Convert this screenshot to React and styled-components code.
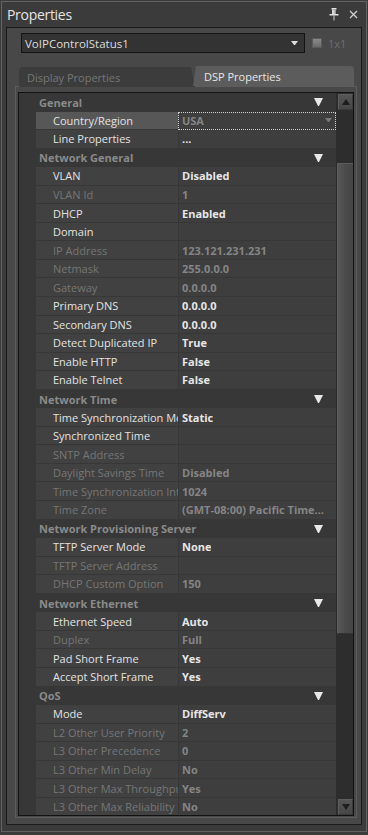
import React from "react";
import styled, { createGlobalStyle } from "styled-components";

const GlobalStyle = createGlobalStyle`
  html, body {
    margin: 0;
    padding: 0;
    background: #3b3b3b;
  }
  body {
    font-family: "Open Sans", "Noto Sans", sans-serif;
  }
  * {
    box-sizing: border-box;
  }
`;

const Window = styled.div`
  width: 368px;
  height: 835px;
  padding: 1px 1px 3px 1px;
  background: #3b3b3b;
  display: flex;
  flex-direction: column;
`;

const Frame = styled.div`
  flex: 1;
  border: 1px solid #626262;
  display: flex;
  flex-direction: column;
  min-height: 0;
`;

const TitleBar = styled.div`
  height: 25px;
  display: flex;
  align-items: center;
  justify-content: space-between;
  padding: 0 8px 0 5px;
`;

const Title = styled.div`
  font-size: 14px;
  color: #e4e4e4;
  letter-spacing: -0.3px;
`;

const TitleIcons = styled.div`
  display: flex;
  align-items: center;
  gap: 10px;
`;

const Body = styled.div`
  flex: 1;
  display: flex;
  padding: 0 4px 6px 4px;
  min-height: 0;
`;

const Panel = styled.div`
  flex: 1;
  border: 1px solid #1a1a1a;
  background: #484848;
  padding: 5px 4px 6px 8px;
  display: flex;
  flex-direction: column;
  min-height: 0;
`;

const Toolbar = styled.div`
  display: flex;
  align-items: center;
  padding-left: 6px;
  height: 20px;
`;

const Select = styled.div`
  width: 284px;
  height: 20px;
  border: 1px solid #141414;
  background: #333333;
  display: flex;
  align-items: center;
  justify-content: space-between;
  padding: 0 6px 0 3px;
  font-size: 11.5px;
  color: #dcdcdc;
`;

const CheckWrap = styled.div`
  display: flex;
  align-items: center;
  margin-left: 7px;
  gap: 6px;
  font-size: 11px;
  color: #6e6e6e;
`;

const CheckBox = styled.div`
  width: 10px;
  height: 10px;
  border: 1px solid #5a5a5a;
  background: linear-gradient(#8a8a8a, #6a6a6a);
`;

const TabStrip = styled.div`
  display: flex;
  margin-top: 13px;
  height: 20px;
  padding-left: 4px;
`;

const Tab = styled.div`
  height: 20px;
  display: flex;
  align-items: center;
  font-size: 11px;
  color: ${(p) => (p.$active ? "#e6e6e6" : "#767676")};
  background: ${(p) => (p.$active ? "#5c5c5c" : "#3c3c3c")};
  width: ${(p) => p.$width}px;
  margin-top: ${(p) => (p.$active ? "0" : "1px")};
  padding-left: ${(p) => (p.$active ? "11px" : "8px")};
  border-radius: ${(p) => (p.$active ? "0 4px 0 0" : "4px 0 0 0")};
  clip-path: ${(p) =>
    p.$active
      ? "polygon(3px 0, 100% 0, 100% 100%, 0 100%)"
      : "polygon(0 0, calc(100% - 4px) 0, 100% 100%, 0 100%)"};
  margin-left: ${(p) => (p.$active ? "-2px" : "0")};
`;

const GridFrame = styled.div`
  flex: 1;
  border: 1px solid #5c5c5c;
  padding: 5px 2px 1px 2px;
  display: flex;
  min-height: 0;
`;

const GridInner = styled.div`
  flex: 1;
  border: 1px solid #121212;
  display: flex;
  background: #373737;
  overflow: hidden;
`;

const Rows = styled.div`
  flex: 1;
  display: flex;
  flex-direction: column;
  min-width: 0;
  border-right: 1px solid #2c2c2c;
`;

const CategoryRow = styled.div`
  height: 18.55px;
  flex: none;
  display: flex;
  align-items: center;
  justify-content: space-between;
  padding: 0 13px 0 20px;
  background: #373737;
  font-size: 11px;
  font-weight: 700;
  color: #8a8a8a;
`;

const PropRow = styled.div`
  height: 18.55px;
  flex: none;
  display: grid;
  grid-template-columns: 17px 142px 1fr;
  font-size: 11px;
`;

const Margin = styled.div`
  background: #373737;
`;

const NameCell = styled.div`
  background: ${(p) => (p.$selected ? "#575757" : "#414141")};
  border-bottom: 1px solid #373737;
  padding-left: 17px;
  display: flex;
  align-items: center;
  white-space: nowrap;
  overflow: hidden;
  color: ${(p) => (p.$disabled ? "#767676" : "#e2e2e2")};
`;

const ValueCell = styled.div`
  background: #3e3e3e;
  border-bottom: 1px solid #373737;
  border-left: 1px solid #373737;
  padding: 0 4px 0 3px;
  display: flex;
  align-items: center;
  justify-content: space-between;
  white-space: nowrap;
  overflow: hidden;
  font-weight: 700;
  color: ${(p) => (p.$disabled ? "#858585" : "#e6e6e6")};
  outline: ${(p) => (p.$focused ? "1px dotted #d0d0d0" : "none")};
  outline-offset: -1px;
`;

const ValueText = styled.span`
  overflow: hidden;
  text-overflow: ellipsis;
`;

const Scrollbar = styled.div`
  width: 16px;
  flex: none;
  background: #2d2d2d;
  display: flex;
  flex-direction: column;
  padding-top: 1px;
`;

const ScrollButton = styled.div`
  height: 16px;
  margin-left: 1px;
  width: 15px;
  border: 1px solid #5e5e5e;
  border-right-color: #3a3a3a;
  border-bottom-color: #3a3a3a;
  background: linear-gradient(#555555, #474747);
  display: flex;
  align-items: center;
  justify-content: center;
`;

const Track = styled.div`
  flex: 1;
  padding-top: 53px;
`;

const Thumb = styled.div`
  height: 471px;
  border-left: 1px solid #5c5c5c;
  border-top: 1px solid #5c5c5c;
  border-bottom: 1px solid #333333;
  background: linear-gradient(to right, #575757, #4a4a4a 50%, #464646);
`;

const Pin = () => (
  <svg width="10" height="13" viewBox="0 0 10 13">
    <rect x="2.5" y="0" width="5" height="1.5" fill="#e0e0e0" />
    <rect x="3" y="1.5" width="4" height="4.5" fill="#d8d8d8" />
    <rect x="5.5" y="1.5" width="1.5" height="4.5" fill="#9a9a9a" />
    <rect x="0.5" y="6" width="9" height="1.5" fill="#e0e0e0" />
    <rect x="4.5" y="7.5" width="1" height="5" fill="#cfcfcf" />
  </svg>
);

const Close = () => (
  <svg width="9" height="9" viewBox="0 0 9 9">
    <path d="M1 1 L8 8 M8 1 L1 8" stroke="#cfcfcf" strokeWidth="1.3" />
  </svg>
);

const Caret = ({ color = "#e8e8e8", w = 9, h = 8 }) => (
  <svg width={w} height={h} viewBox={`0 0 ${w} ${h}`}>
    <polygon points={`0,0 ${w},0 ${w / 2 + 0.5},${h} ${w / 2 - 0.5},${h}`} fill={color} />
  </svg>
);

const Arrow = ({ up }) => (
  <svg width="8" height="6" viewBox="0 0 8 6">
    <polygon points={up ? "4,0 8,6 0,6" : "0,0 8,0 4,6"} fill="#1e1e1e" />
  </svg>
);

const sections = [
  {
    title: "General",
    rows: [
      { name: "Country/Region", value: "USA", vd: true, selected: true },
      { name: "Line Properties", value: "..." },
    ],
  },
  {
    title: "Network General",
    rows: [
      { name: "VLAN", value: "Disabled" },
      { name: "VLAN Id", value: "1", nd: true, vd: true },
      { name: "DHCP", value: "Enabled" },
      { name: "Domain", value: "" },
      { name: "IP Address", value: "123.121.231.231", nd: true, vd: true },
      { name: "Netmask", value: "255.0.0.0", nd: true, vd: true },
      { name: "Gateway", value: "0.0.0.0", nd: true, vd: true },
      { name: "Primary DNS", value: "0.0.0.0" },
      { name: "Secondary DNS", value: "0.0.0.0" },
      { name: "Detect Duplicated IP", value: "True" },
      { name: "Enable HTTP", value: "False" },
      { name: "Enable Telnet", value: "False" },
    ],
  },
  {
    title: "Network Time",
    rows: [
      { name: "Time Synchronization Mode", value: "Static" },
      { name: "Synchronized Time", value: "" },
      { name: "SNTP Address", value: "", nd: true },
      { name: "Daylight Savings Time", value: "Disabled", nd: true, vd: true },
      { name: "Time Synchronization Interval", value: "1024", nd: true, vd: true },
      { name: "Time Zone", value: "(GMT-08:00) Pacific Time...", nd: true, vd: true },
    ],
  },
  {
    title: "Network Provisioning Server",
    rows: [
      { name: "TFTP Server Mode", value: "None" },
      { name: "TFTP Server Address", value: "", nd: true },
      { name: "DHCP Custom Option", value: "150", nd: true, vd: true },
    ],
  },
  {
    title: "Network Ethernet",
    rows: [
      { name: "Ethernet Speed", value: "Auto" },
      { name: "Duplex", value: "Full", nd: true, vd: true },
      { name: "Pad Short Frame", value: "Yes" },
      { name: "Accept Short Frame", value: "Yes" },
    ],
  },
  {
    title: "QoS",
    rows: [
      { name: "Mode", value: "DiffServ" },
      { name: "L2 Other User Priority", value: "2", nd: true, vd: true },
      { name: "L3 Other Precedence", value: "0", nd: true, vd: true },
      { name: "L3 Other Min Delay", value: "No", nd: true, vd: true },
      { name: "L3 Other Max Throughput", value: "Yes", nd: true, vd: true },
      { name: "L3 Other Max Reliability", value: "No", nd: true, vd: true },
    ],
  },
];

const App = () => {
  return (
    <Window>
      <GlobalStyle />
      <Frame>
        <TitleBar>
          <Title>Properties</Title>
          <TitleIcons>
            <Pin />
            <Close />
          </TitleIcons>
        </TitleBar>
        <Body>
          <Panel>
            <Toolbar>
              <Select>
                <span>VoIPControlStatus1</span>
                <Caret color="#dcdcdc" w={7} h={4} />
              </Select>
              <CheckWrap>
                <CheckBox />
                1x1
              </CheckWrap>
            </Toolbar>
            <TabStrip>
              <Tab $width={176}>Display Properties</Tab>
              <Tab $active $width={161}>DSP Properties</Tab>
            </TabStrip>
            <GridFrame>
              <GridInner>
                <Rows>
                  {sections.map((s) => (
                    <React.Fragment key={s.title}>
                      <CategoryRow>
                        <span>{s.title}</span>
                        <Caret />
                      </CategoryRow>
                      {s.rows.map((r) => (
                        <PropRow key={r.name}>
                          <Margin />
                          <NameCell $disabled={r.nd} $selected={r.selected}>
                            {r.name}
                          </NameCell>
                          <ValueCell $disabled={r.vd} $focused={r.selected}>
                            <ValueText>{r.value}</ValueText>
                            {r.selected && <Caret color="#7a7a7a" w={7} h={4} />}
                          </ValueCell>
                        </PropRow>
                      ))}
                    </React.Fragment>
                  ))}
                </Rows>
                <Scrollbar>
                  <ScrollButton>
                    <Arrow up />
                  </ScrollButton>
                  <Track>
                    <Thumb />
                  </Track>
                  <ScrollButton>
                    <Arrow />
                  </ScrollButton>
                </Scrollbar>
              </GridInner>
            </GridFrame>
          </Panel>
        </Body>
      </Frame>
    </Window>
  );
};

export default App;
